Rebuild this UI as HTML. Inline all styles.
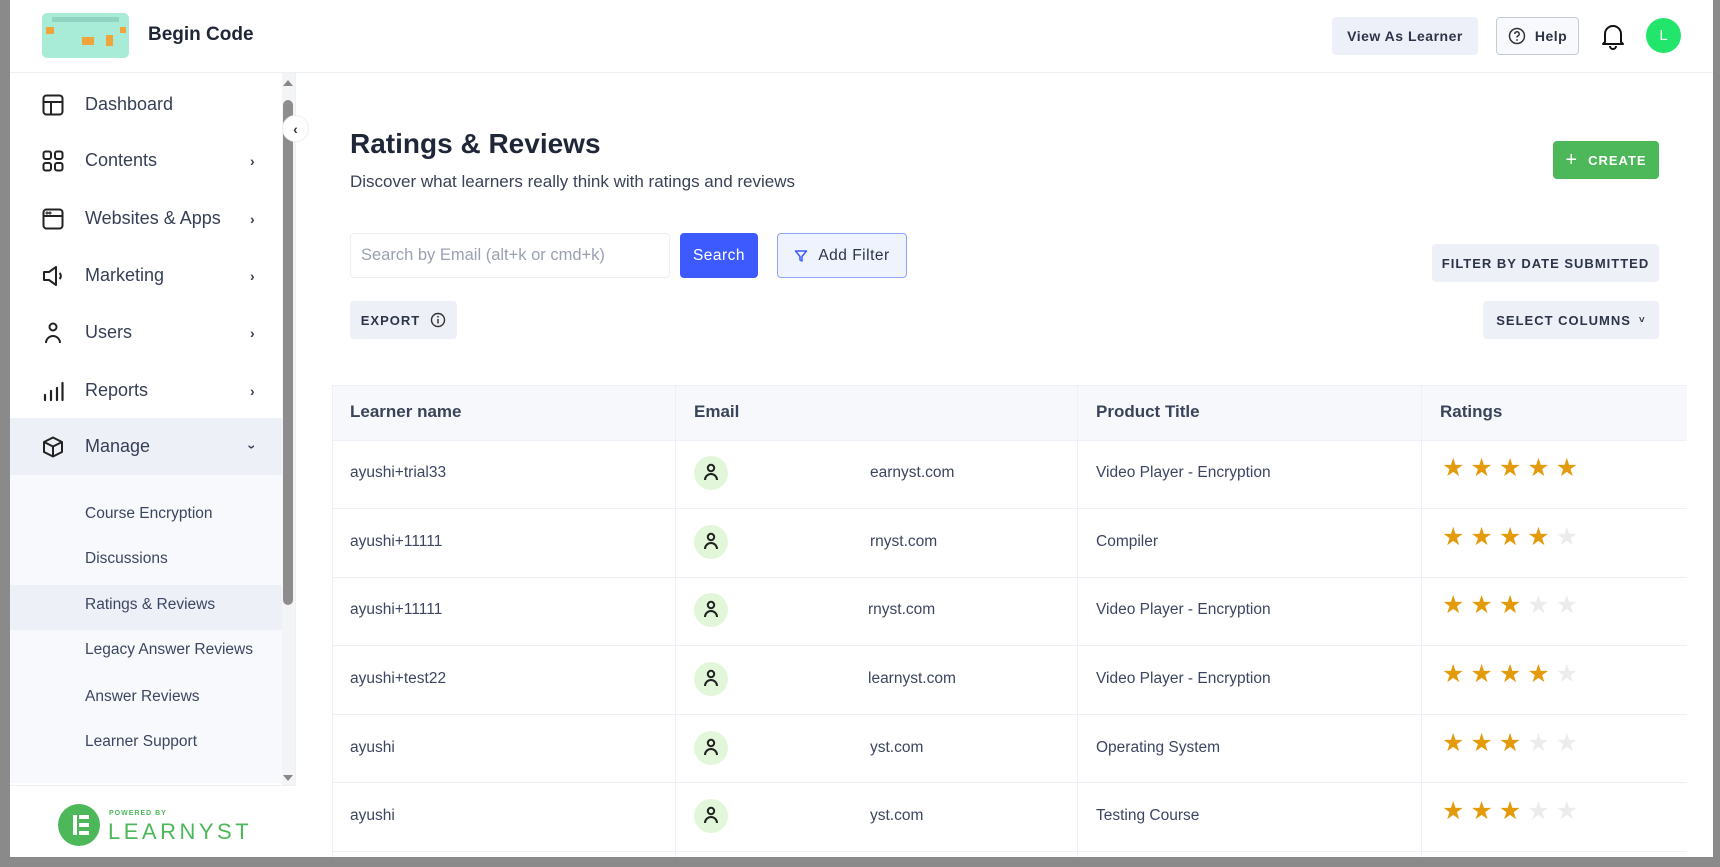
<!DOCTYPE html>
<html><head><meta charset="utf-8"><style>
*{box-sizing:border-box;margin:0;padding:0}
body{width:1720px;height:867px;background:#8a8a8a;font-family:"Liberation Sans",sans-serif;color:#363f55;position:relative;overflow:hidden}
.frame{position:absolute;left:10px;top:0;width:1703px;height:857px;background:#fff;overflow:hidden}
.abs{position:absolute}
.hdr{left:0;top:0;width:1703px;height:73px;border-bottom:1px solid #eef0f5;background:#fff}
.side{left:0;top:73px;width:286px;height:784px;background:#fff;border-right:1px solid #eef0f5}
.mi{position:absolute;left:0;width:272px;height:57px;display:flex;align-items:center;font-size:18px;color:#363f55}
.mi svg{position:absolute;left:32px}
.mi span{position:absolute;left:75px}
.mi i{position:absolute;left:240px;font-style:normal;font-size:14px;font-weight:bold}
.sub{position:absolute;left:75px;font-size:15.5px;color:#3d4660}
.btn{position:absolute;border-radius:4px;display:flex;align-items:center;justify-content:center;font-weight:bold;font-size:13px;letter-spacing:1px;color:#2d3448}
.th{position:absolute;font-weight:bold;font-size:17px;color:#3a4459}
.td{position:absolute;font-size:15.5px;color:#3d4660}
.hl{position:absolute;left:322px;width:1355px;height:1px;background:#edf0f7}
.vl{position:absolute;top:385px;width:1px;height:472px;background:#edf0f7}
.av{position:absolute;left:684px;width:34px;height:34px;border-radius:50%;background:#e2f6da}
.st{position:absolute;left:1432px;font-size:25px;letter-spacing:6px;color:#e39b0b}
.st b{color:#ececec;font-weight:normal}
</style></head><body>
<div class="frame">
<div class="abs hdr">
  <div class="abs" style="left:32px;top:13px;width:87px;height:45px;border-radius:5px;background:#a8ecd8;overflow:hidden">
    <div style="margin:4px 10px;height:5px;background:#8fd3c0"></div>
    <div style="position:absolute;left:4px;top:14px;width:8px;height:7px;background:#f0a43a"></div>
    <div style="position:absolute;left:40px;top:24px;width:12px;height:8px;background:#f0a43a"></div>
    <div style="position:absolute;left:64px;top:22px;width:7px;height:11px;background:#f0a43a"></div>
    <div style="position:absolute;left:78px;top:14px;width:6px;height:6px;background:#f0a43a"></div>
  </div>
  <div class="abs" style="left:138px;top:24px;font-size:19px;font-weight:bold;color:#1f2638">Begin Code</div>
  <div class="btn" style="left:1322px;top:17px;width:146px;height:38px;background:#edf0f8;font-size:14px;letter-spacing:.5px">View As Learner</div>
  <div class="btn" style="left:1486px;top:17px;width:83px;height:38px;background:#f8f9fd;border:1.5px solid #c4cad8;font-size:14px;letter-spacing:.5px">
    <svg width="18" height="18" viewBox="0 0 18 18" style="margin-right:9px"><circle cx="9" cy="9" r="7.5" fill="none" stroke="#333" stroke-width="1.5"/><path d="M6.8 7a2.2 2.2 0 1 1 3 2c-.7.3-.8.8-.8 1.5" fill="none" stroke="#333" stroke-width="1.5"/><circle cx="9" cy="13" r=".9" fill="#333"/></svg>Help</div>
  <svg class="abs" style="left:1591px;top:22px" width="24" height="28" viewBox="0 0 24 28"><path d="M4 20V12a8 8 0 0 1 16 0v8l2 2H2z" fill="none" stroke="#111" stroke-width="2" stroke-linejoin="round"/><path d="M9 24a3 3 0 0 0 6 0" fill="none" stroke="#111" stroke-width="2"/></svg>
  <div class="abs" style="left:1636px;top:18px;width:35px;height:35px;border-radius:50%;background:#22e66c;color:#fff;font-size:15px;display:flex;align-items:center;justify-content:center">L</div>
</div>

<div class="abs side">
  <div class="mi" style="top:3px"><svg width="22" height="22" viewBox="0 0 22 22" fill="none" stroke="#222" stroke-width="2"><rect x="1.5" y="1.5" width="19" height="19" rx="3"/><path d="M1.5 8h19M9 8v12.5"/></svg><span>Dashboard</span></div>
  <div class="mi" style="top:59px"><svg width="22" height="22" viewBox="0 0 22 22" fill="none" stroke="#222" stroke-width="2"><rect x="1.5" y="1.5" width="7.5" height="7.5" rx="2"/><rect x="13" y="1.5" width="7.5" height="7.5" rx="2"/><rect x="1.5" y="13" width="7.5" height="7.5" rx="2"/><rect x="13" y="13" width="7.5" height="7.5" rx="2"/></svg><span>Contents</span><i>›</i></div>
  <div class="mi" style="top:117px"><svg width="22" height="22" viewBox="0 0 22 22" fill="none" stroke="#222" stroke-width="2"><rect x="1.5" y="1.5" width="19" height="19" rx="3"/><path d="M1.5 8h19"/><circle cx="5" cy="5" r=".5"/><circle cx="8" cy="5" r=".5"/></svg><span>Websites &amp; Apps</span><i>›</i></div>
  <div class="mi" style="top:174px"><svg width="22" height="22" viewBox="0 0 22 22" fill="none" stroke="#222" stroke-width="2" stroke-linejoin="round"><path d="M2 7h5l7-5v18l-7-5H2z"/><path d="M17.5 8a4 4 0 0 1 0 6"/></svg><span>Marketing</span><i>›</i></div>
  <div class="mi" style="top:231px"><svg width="22" height="22" viewBox="0 0 22 22" fill="none" stroke="#222" stroke-width="2"><circle cx="11" cy="5" r="3.5"/><path d="M4 21a7 7 0 0 1 14 0"/></svg><span>Users</span><i>›</i></div>
  <div class="mi" style="top:289px"><svg width="22" height="22" viewBox="0 0 22 22" fill="none" stroke="#222" stroke-width="2.2" stroke-linecap="round"><path d="M3 20v-5M9 20v-9M15 20v-12M20.5 20V3"/></svg><span>Reports</span><i>›</i></div>
  <div class="mi" style="top:345px;background:#edf0f7"><svg width="22" height="22" viewBox="0 0 22 22" fill="none" stroke="#222" stroke-width="2" stroke-linejoin="round"><path d="M11 1.5l9 4.5v10l-9 4.5-9-4.5V6z"/><path d="M2 6l9 4.5L20 6M11 10.5v10"/></svg><span>Manage</span><i style="transform:rotate(90deg)">›</i></div>
  <div class="abs" style="left:0;top:402px;width:272px;height:308px;background:#f7f9fc"></div>
  <div class="abs" style="left:0;top:512px;width:272px;height:45px;background:#edf0f7"></div>
  <div class="sub" style="top:432px">Course Encryption</div>
  <div class="sub" style="top:477px">Discussions</div>
  <div class="sub" style="top:523px">Ratings &amp; Reviews</div>
  <div class="sub" style="top:568px;width:183px;overflow:hidden;white-space:nowrap">Legacy Answer Reviews</div>
  <div class="sub" style="top:615px">Answer Reviews</div>
  <div class="sub" style="top:660px">Learner Support</div>
  <div class="abs" style="left:272px;top:0;width:13px;height:712px;background:#f3f4f6"></div>
  <div class="abs" style="left:273px;top:7px;width:0;height:0;border-left:5px solid transparent;border-right:5px solid transparent;border-bottom:6px solid #888"></div>
  <div class="abs" style="left:273px;top:27px;width:10px;height:505px;background:#8d8d8d;border-radius:5px"></div>
  <div class="abs" style="left:273px;top:702px;width:0;height:0;border-left:5px solid transparent;border-right:5px solid transparent;border-top:6px solid #888"></div>
  <div class="abs" style="left:0;top:712px;width:286px;height:72px;background:#fff;border-top:1px solid #eef0f5"></div>
  <div class="abs" style="left:48px;top:731px;width:42px;height:42px;border-radius:50%;background:#4cb85a"></div>
  <div class="abs" style="left:63px;top:742px;width:4px;height:20px;background:#fff"></div>
  <div class="abs" style="left:69px;top:742px;width:10px;height:4px;background:#fff;box-shadow:0 8px 0 #fff,0 16px 0 #fff"></div>
  <div class="abs" style="left:99px;top:737px;font-size:7px;font-weight:bold;color:#4cb85a;letter-spacing:1px">POWERED BY</div>
  <div class="abs" style="left:98px;top:746px;font-size:22px;color:#4cb85a;letter-spacing:3.5px">LEARNYST</div>
</div>
<div class="abs" style="left:272px;top:115px;width:27px;height:27px;border-radius:50%;background:#fff;border:1px solid #eceef3;font-size:14px;font-weight:bold;display:flex;align-items:center;justify-content:center;color:#333">‹</div>

<div class="abs" style="left:340px;top:128px;font-size:28px;font-weight:bold;color:#1f2638">Ratings &amp; Reviews</div>
<div class="abs" style="left:340px;top:172px;font-size:17px;color:#3a4256">Discover what learners really think with ratings and reviews</div>
<div class="btn" style="left:1543px;top:141px;width:106px;height:38px;background:#4cb85a;color:#fff;font-size:13px"><span style="font-size:20px;font-weight:normal;margin-right:10px">+</span>CREATE</div>

<div class="abs" style="left:340px;top:233px;width:320px;height:45px;border:1px solid #eceef3;border-radius:4px;font-size:16.5px;color:#9aa1b3;padding:12px 10px">Search by Email (alt+k or cmd+k)</div>
<div class="btn" style="left:670px;top:233px;width:78px;height:45px;background:#3d5afe;color:#fff;font-weight:normal;font-size:15.5px;letter-spacing:.5px">Search</div>
<div class="btn" style="left:767px;top:233px;width:130px;height:45px;background:#eff3fe;border:1.5px solid #8ea5f8;font-weight:normal;font-size:15.5px;letter-spacing:.5px;color:#2d3448"><svg width="14" height="14" viewBox="0 0 14 14" style="margin-right:10px"><path d="M1.5 2h11L8 7.5V12L6 11V7.5z" fill="none" stroke="#3d5afe" stroke-width="1.5" stroke-linejoin="round"/></svg>Add Filter</div>
<div class="btn" style="left:340px;top:301px;width:107px;height:38px;background:#edf0f7">EXPORT<svg width="16" height="16" viewBox="0 0 16 16" style="margin-left:10px"><circle cx="8" cy="8" r="6.5" fill="none" stroke="#333" stroke-width="1.4"/><path d="M8 7v4.5" stroke="#333" stroke-width="1.5"/><circle cx="8" cy="4.8" r=".9" fill="#333"/></svg></div>
<div class="btn" style="left:1422px;top:244px;width:227px;height:38px;background:#edf0f7">FILTER BY DATE SUBMITTED</div>
<div class="btn" style="left:1473px;top:301px;width:176px;height:38px;background:#edf0f7">SELECT COLUMNS <span style="font-size:10px;margin-left:8px">˅</span></div>

<div class="abs" style="left:322px;top:385px;width:1355px;height:55px;background:#f7f8fc;border-top:1px solid #edf0f7"></div>
<div class="vl" style="left:322px"></div><div class="vl" style="left:665px"></div><div class="vl" style="left:1067px"></div><div class="vl" style="left:1411px"></div>
<div class="hl" style="top:440px"></div><div class="hl" style="top:508px"></div><div class="hl" style="top:577px"></div><div class="hl" style="top:645px"></div><div class="hl" style="top:714px"></div><div class="hl" style="top:782px"></div><div class="hl" style="top:851px"></div>
<div class="th" style="left:340px;top:402px">Learner name</div>
<div class="th" style="left:684px;top:402px">Email</div>
<div class="th" style="left:1086px;top:402px">Product Title</div>
<div class="th" style="left:1430px;top:402px">Ratings</div>

<div class="td" style="left:340px;top:464px">ayushi+trial33</div>
<div class="td" style="left:340px;top:533px">ayushi+11111</div>
<div class="td" style="left:340px;top:601px">ayushi+11111</div>
<div class="td" style="left:340px;top:670px">ayushi+test22</div>
<div class="td" style="left:340px;top:739px">ayushi</div>
<div class="td" style="left:340px;top:807px">ayushi</div>

<div class="av" style="top:456px"></div><div class="av" style="top:525px"></div><div class="av" style="top:593px"></div><div class="av" style="top:662px"></div><div class="av" style="top:731px"></div><div class="av" style="top:799px"></div>
<svg class="abs" style="left:684px;top:456px" width="34" height="375" viewBox="0 0 34 375" fill="none" stroke="#222" stroke-width="2">
<g id="u"><circle cx="17" cy="12" r="3.2"/><path d="M11 24a6 6 0 0 1 12 0"/></g>
<use href="#u" y="69"/><use href="#u" y="137"/><use href="#u" y="206"/><use href="#u" y="275"/><use href="#u" y="343"/></svg>

<div class="td" style="left:860px;top:464px">earnyst.com</div>
<div class="td" style="left:860px;top:533px">rnyst.com</div>
<div class="td" style="left:858px;top:601px">rnyst.com</div>
<div class="td" style="left:858px;top:670px">learnyst.com</div>
<div class="td" style="left:860px;top:739px">yst.com</div>
<div class="td" style="left:860px;top:807px">yst.com</div>

<div class="td" style="left:1086px;top:464px">Video Player - Encryption</div>
<div class="td" style="left:1086px;top:533px">Compiler</div>
<div class="td" style="left:1086px;top:601px">Video Player - Encryption</div>
<div class="td" style="left:1086px;top:670px">Video Player - Encryption</div>
<div class="td" style="left:1086px;top:739px">Operating System</div>
<div class="td" style="left:1086px;top:807px">Testing Course</div>

<div class="st" style="top:453px">★★★★★</div>
<div class="st" style="top:522px">★★★★<b>★</b></div>
<div class="st" style="top:590px">★★★<b>★★</b></div>
<div class="st" style="top:659px">★★★★<b>★</b></div>
<div class="st" style="top:728px">★★★<b>★★</b></div>
<div class="st" style="top:796px">★★★<b>★★</b></div>
</div>
</body></html>
